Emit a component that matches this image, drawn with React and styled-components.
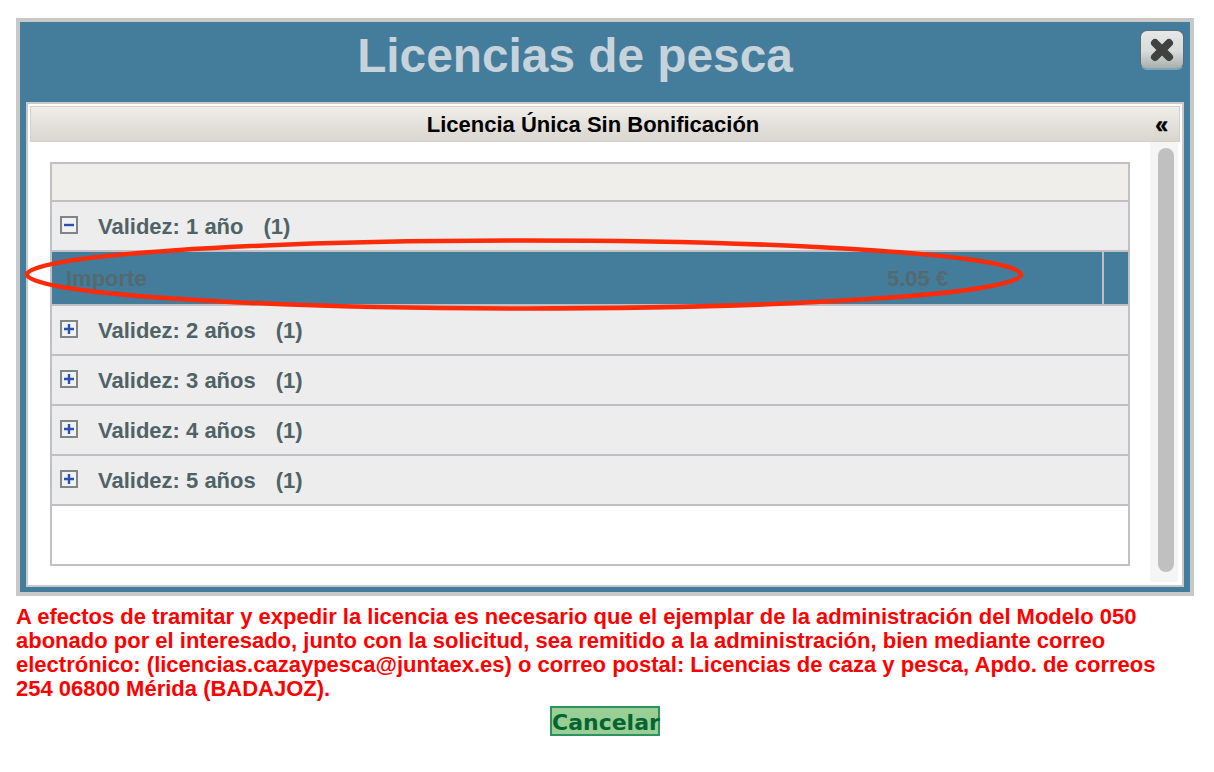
import React from "react";
import styled, { createGlobalStyle } from "styled-components";

const Global = createGlobalStyle`
  html, body { margin: 0; padding: 0; background: #fff; }
  body { font-family: "Liberation Sans", Arial, sans-serif; }
`;

const Page = styled.div`
  position: relative;
  width: 1214px;
  height: 772px;
  overflow: hidden;
  padding: 18px 20px 0 16px;
  box-sizing: border-box;
`;

const Frame = styled.section`
  box-sizing: border-box;
  height: 578px;
  border: 4px solid #c8c8c8;
  background: #447c9c;
  display: flex;
  flex-direction: column;
  padding: 0 6px 5px;
`;

const TitleBar = styled.header`
  height: 80px;
  flex: none;
  display: flex;
  align-items: flex-start;
  gap: 10px;
  margin-left: -6px;
`;

const Title = styled.h1`
  flex: 1;
  margin: 0;
  text-align: center;
  font-size: 47.8px;
  line-height: 68px;
  font-weight: 700;
  color: #c6d3db;
`;

const CloseButton = styled.button`
  flex: none;
  width: 44px;
  height: 40px;
  margin-top: 8px;
  padding: 0;
  display: flex;
  align-items: center;
  justify-content: center;
  border: 1px solid #566f7d;
  border-bottom: 2px solid #7fa3b8;
  border-radius: 7px;
  background: linear-gradient(#e6e7e6, #d8dbd9 55%, #a9b0ac);
`;

const Panel = styled.div`
  flex: 1;
  min-height: 0;
  box-sizing: border-box;
  border: 2px solid #c9c9c9;
  background: #fff;
  display: flex;
  flex-direction: column;
`;

const PanelHeading = styled.div`
  flex: none;
  height: 36px;
  margin: 2px 2px 0;
  padding: 1px 24px 0 0;
  box-sizing: border-box;
  border: 1px solid #d6cfc8;
  background: linear-gradient(#f0eeea, #d9d5cf);
  display: flex;
  align-items: center;
  justify-content: center;
  position: relative;
  font-size: 22px;
  font-weight: 700;
  color: #000;
`;

const Collapse = styled.span`
  position: absolute;
  right: 11px;
  top: 4px;
  font-size: 23px;
  line-height: 28px;
  -webkit-text-stroke: 0.5px #000;
`;

const PanelBody = styled.div`
  flex: 1;
  min-height: 0;
  display: flex;
  padding: 0 4px 2px 22px;
`;

const Grid = styled.div`
  width: 1080px;
  height: 404px;
  margin-top: 20px;
  box-sizing: border-box;
  border: 2px solid #c0c0c6;
  background: #fff;
  flex: none;
  display: flex;
  flex-direction: column;
`;

const GridHeader = styled.div`
  height: 36px;
  flex: none;
  background: #f0eeea;
  border-bottom: 2px solid #c0c0c2;
`;

const GroupRow = styled.div`
  height: 48px;
  flex: none;
  box-sizing: content-box;
  background: #ededed;
  border-bottom: 2px solid #c0c0c4;
  display: flex;
  align-items: center;
  padding-left: 8px;
  font-size: 22px;
  font-weight: 700;
  color: #4f6367;
`;

const Toggle = styled.span`
  width: 18px;
  height: 18px;
  margin-right: 20px;
  margin-top: -2px;
  flex: none;
  display: block;
`;

const GroupText = styled.span`
  display: flex;
  margin-top: 1px;
`;

const Count = styled.span`
  margin-left: 20px;
`;

const DetailRow = styled.div`
  height: 52px;
  flex: none;
  background: #447c9c;
  border-bottom: 2px solid #c0c0c4;
  display: flex;
  align-items: center;
  font-size: 22px;
  font-weight: 700;
  color: #536a6f;
`;

const DetailLabel = styled.span`
  margin-left: 14px;
  width: 821px;
  flex: none;
  margin-top: 2px;
`;

const DetailAmount = styled.span`
  width: 215px;
  flex: none;
  margin-top: 2px;
`;

const DetailCell = styled.span`
  flex: 1;
  align-self: stretch;
  border-left: 2px solid #c0c0c4;
`;

const ScrollTrack = styled.div`
  width: 28px;
  height: 440px;
  flex: none;
  margin-left: 20px;
  box-sizing: border-box;
  background: #f5f5f5;
  padding: 6px 4px 10px 8px;
  display: flex;
`;

const ScrollThumb = styled.div`
  flex: 1;
  border-radius: 8px;
  background: #c0c0c0;
`;

const Notice = styled.p`
  margin: 9px 0 0;
  width: 1170px;
  font-size: 22px;
  line-height: 24px;
  font-weight: 700;
  color: #f00;
`;

const Actions = styled.div`
  display: flex;
  justify-content: center;
  margin-top: 5px;
`;

const CancelButton = styled.button`
  width: 110px;
  height: 30px;
  padding: 2px 0 0;
  box-sizing: border-box;
  border: 2px solid #2e9160;
  background: #99cf94;
  color: #056431;
  font-family: "DejaVu Sans", Verdana, sans-serif;
  font-size: 22px;
  font-weight: 700;
  line-height: 26px;
`;

const Oval = styled.svg`
  position: absolute;
  left: 0;
  top: 0;
  pointer-events: none;
`;

const ToggleGlyph = styled.svg`
  display: block;
`;

const ToggleIcon = ({ open }) => (
  <Toggle>
    <ToggleGlyph width="18" height="18" viewBox="0 0 18 18">
      <rect x="1" y="1" width="16" height="16" fill="#f1f1f1" stroke="#7f8486" strokeWidth="2" />
      <path d={open ? "M4 9h10" : "M4 9h10M9 4v10"} stroke="#2a4fb5" strokeWidth="2.4" fill="none" />
    </ToggleGlyph>
  </Toggle>
);

const Group = ({ label, open }) => (
  <GroupRow>
    <ToggleIcon open={open} />
    <GroupText>
      {label}
      <Count>(1)</Count>
    </GroupText>
  </GroupRow>
);

export default function App() {
  return (
    <Page>
      <Global />
      <Frame>
        <TitleBar>
          <Title>Licencias de pesca</Title>
          <CloseButton aria-label="Cerrar">
            <svg width="26" height="24" viewBox="0 0 26 24">
              <path d="M6 5l14 14M20 5L6 19" stroke="#3f4241" strokeWidth="8" strokeLinecap="round" fill="none" />
            </svg>
          </CloseButton>
        </TitleBar>
        <Panel>
          <PanelHeading>
            Licencia Única Sin Bonificación
            <Collapse>«</Collapse>
          </PanelHeading>
          <PanelBody>
            <Grid>
              <GridHeader />
              <Group label="Validez: 1 año" open />
              <DetailRow>
                <DetailLabel>Importe</DetailLabel>
                <DetailAmount>5.05 €</DetailAmount>
                <DetailCell />
              </DetailRow>
              <Group label="Validez: 2 años" />
              <Group label="Validez: 3 años" />
              <Group label="Validez: 4 años" />
              <Group label="Validez: 5 años" />
            </Grid>
            <ScrollTrack>
              <ScrollThumb />
            </ScrollTrack>
          </PanelBody>
        </Panel>
      </Frame>
      <Notice>
        A efectos de tramitar y expedir la licencia es necesario que el ejemplar de la administración del Modelo 050
        abonado por el interesado, junto con la solicitud, sea remitido a la administración, bien mediante correo
        electrónico: (licencias.cazaypesca@juntaex.es) o correo postal: Licencias de caza y pesca, Apdo. de correos
        254 06800 Mérida (BADAJOZ).
      </Notice>
      <Actions>
        <CancelButton>Cancelar</CancelButton>
      </Actions>
      <Oval width="1214" height="772" viewBox="0 0 1214 772">
        <ellipse cx="524" cy="274.5" rx="497" ry="34" fill="none" stroke="#fb2a08" strokeWidth="4.5" />
      </Oval>
    </Page>
  );
}
